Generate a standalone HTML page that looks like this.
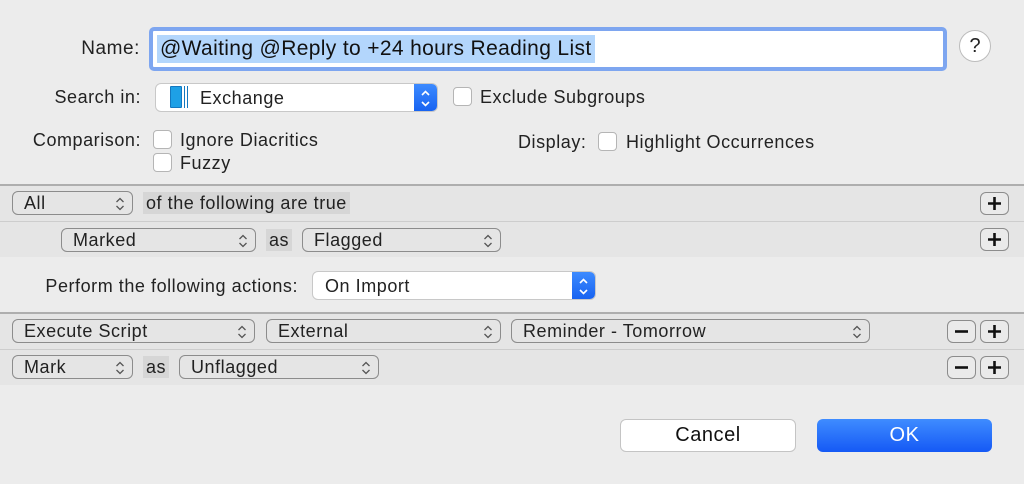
<!DOCTYPE html>
<html><head><meta charset="utf-8"><style>
*{box-sizing:border-box;margin:0;padding:0}
body{width:1024px;height:484px;background:#ececec;font-family:"Liberation Sans",sans-serif;color:#222;position:relative;overflow:hidden;font-size:18px;letter-spacing:0.55px}
.a{position:absolute}
.lbl{position:absolute;white-space:nowrap;line-height:20px}
.cb{position:absolute;width:19px;height:19px;border:1px solid #b5b5b5;border-radius:4px;background:#fff}
.row{position:absolute;left:0;width:1024px;background:#e5e5e5}
.pop{position:absolute;border:1px solid #8c8c8c;border-radius:6px;height:24px;line-height:22px;padding-left:11px;font-size:18px;white-space:nowrap}
.pop svg{position:absolute;right:7px;top:5px}
.tag{position:absolute;background:#d6d6d6;height:22px;line-height:22px;padding:0 3px;font-size:18px;white-space:nowrap}
.btn{position:absolute;width:29px;height:23px;border:1px solid #8c8c8c;border-radius:6px;background:#eaeaea}
</style></head><body>
<div class="lbl" style="right:884px;top:39px;font-size:19px">Name:</div>
<div class="a" style="left:149px;top:27px;width:798px;height:44px;border:4px solid #7ea6f0;border-radius:5px;background:#fff"></div>
<div class="a" style="left:157px;top:35px;width:438px;height:28px;background:#b3d6fc"></div>
<div class="lbl" style="left:160px;top:37px;font-size:21px;letter-spacing:0.35px;line-height:24px;color:#111">@Waiting @Reply to +24 hours Reading List</div>
<div class="a" style="left:959px;top:30px;width:32px;height:32px;border-radius:50%;background:#fff;border:1px solid #bcbcbc;text-align:center;line-height:30px;font-size:20px;letter-spacing:0">?</div>

<div class="lbl" style="right:883px;top:87px">Search in:</div>
<div class="a" style="left:155px;top:83px;width:283px;height:29px;background:#fff;border:1px solid #c8c8c8;border-radius:6px;overflow:hidden">
<div class="a" style="left:14px;top:2px;width:12px;height:22px;background:#1ea0e6;border:1px solid #1478c0;border-radius:1px"></div>
<div class="a" style="left:28px;top:2px;width:1px;height:22px;background:#1478c0"></div>
<div class="a" style="left:31px;top:2px;width:1px;height:22px;background:#1478c0"></div>
<div class="lbl" style="left:44px;top:4px">Exchange</div>
<div class="a" style="right:0;top:0;width:23px;height:29px;background:linear-gradient(#3d8bff,#1560f0)">
<svg width="23" height="29"><path d="M8 11l3.5-3.5L15 11M8 18l3.5 3.5L15 18" fill="none" stroke="#fff" stroke-width="1.6"/></svg></div>
</div>
<div class="cb" style="left:453px;top:87px"></div>
<div class="lbl" style="left:480px;top:87px">Exclude Subgroups</div>

<div class="lbl" style="right:883px;top:130px">Comparison:</div>
<div class="cb" style="left:153px;top:130px"></div>
<div class="lbl" style="left:180px;top:130px">Ignore Diacritics</div>
<div class="cb" style="left:153px;top:153px"></div>
<div class="lbl" style="left:180px;top:153px">Fuzzy</div>
<div class="lbl" style="left:518px;top:132px">Display:</div>
<div class="cb" style="left:598px;top:132px"></div>
<div class="lbl" style="left:626px;top:132px">Highlight Occurrences</div>

<div class="row" style="top:184px;height:2px;background:#aeaeae"></div>
<div class="row" style="top:186px;height:35px"></div>
<div class="row" style="top:221px;height:1px;background:#cdcdcd"></div>
<div class="row" style="top:222px;height:35px"></div>
<div class="row" style="top:312px;height:2px;background:#aeaeae"></div>
<div class="row" style="top:314px;height:35px"></div>
<div class="row" style="top:349px;height:1px;background:#cdcdcd"></div>
<div class="row" style="top:350px;height:35px"></div>

<svg width="0" height="0" style="position:absolute"><defs><symbol id="ch" viewBox="0 0 10 14"><path d="M1.5 5L5 1.5 8.5 5M1.5 9L5 12.5 8.5 9" fill="none" stroke="#555" stroke-width="1.3"/></symbol></defs></svg>

<div class="pop" style="left:12px;top:191px;width:121px">All<svg width="10" height="14"><use href="#ch"/></svg></div>
<div class="tag" style="left:143px;top:192px">of the following are true</div>
<div class="btn" style="left:980px;top:192px"><svg width="27" height="21"><path d="M13.5 4v13M7 10.5h13" stroke="#111" stroke-width="2.6"/></svg></div>

<div class="pop" style="left:61px;top:228px;width:195px">Marked<svg width="10" height="14"><use href="#ch"/></svg></div>
<div class="tag" style="left:266px;top:229px">as</div>
<div class="pop" style="left:302px;top:228px;width:199px">Flagged<svg width="10" height="14"><use href="#ch"/></svg></div>
<div class="btn" style="left:980px;top:228px"><svg width="27" height="21"><path d="M13.5 4v13M7 10.5h13" stroke="#111" stroke-width="2.6"/></svg></div>

<div class="lbl" style="right:726px;top:276px">Perform the following actions:</div>
<div class="a" style="left:312px;top:271px;width:284px;height:29px;background:#fff;border:1px solid #c8c8c8;border-radius:6px;overflow:hidden">
<div class="lbl" style="left:12px;top:4px">On Import</div>
<div class="a" style="right:0;top:0;width:23px;height:29px;background:linear-gradient(#3d8bff,#1560f0)">
<svg width="23" height="29"><path d="M8 11l3.5-3.5L15 11M8 18l3.5 3.5L15 18" fill="none" stroke="#fff" stroke-width="1.6"/></svg></div>
</div>

<div class="pop" style="left:12px;top:319px;width:243px">Execute Script<svg width="10" height="14"><use href="#ch"/></svg></div>
<div class="pop" style="left:266px;top:319px;width:235px">External<svg width="10" height="14"><use href="#ch"/></svg></div>
<div class="pop" style="left:511px;top:319px;width:359px">Reminder - Tomorrow<svg width="10" height="14"><use href="#ch"/></svg></div>
<div class="btn" style="left:947px;top:320px"><svg width="27" height="21"><path d="M7 10.5h13" stroke="#111" stroke-width="2.6"/></svg></div>
<div class="btn" style="left:980px;top:320px"><svg width="27" height="21"><path d="M13.5 4v13M7 10.5h13" stroke="#111" stroke-width="2.6"/></svg></div>

<div class="pop" style="left:12px;top:355px;width:121px">Mark<svg width="10" height="14"><use href="#ch"/></svg></div>
<div class="tag" style="left:143px;top:356px">as</div>
<div class="pop" style="left:179px;top:355px;width:200px">Unflagged<svg width="10" height="14"><use href="#ch"/></svg></div>
<div class="btn" style="left:947px;top:356px"><svg width="27" height="21"><path d="M7 10.5h13" stroke="#111" stroke-width="2.6"/></svg></div>
<div class="btn" style="left:980px;top:356px"><svg width="27" height="21"><path d="M13.5 4v13M7 10.5h13" stroke="#111" stroke-width="2.6"/></svg></div>

<div class="a" style="left:620px;top:419px;width:176px;height:33px;background:#fff;border:1px solid #c4c4c4;border-radius:6px;text-align:center;line-height:31px;font-size:20px;color:#111">Cancel</div>
<div class="a" style="left:817px;top:419px;width:175px;height:33px;background:linear-gradient(#3f8cff,#1559f5);border-radius:6px;text-align:center;line-height:33px;font-size:20px;color:#fff">OK</div>
</body></html>
